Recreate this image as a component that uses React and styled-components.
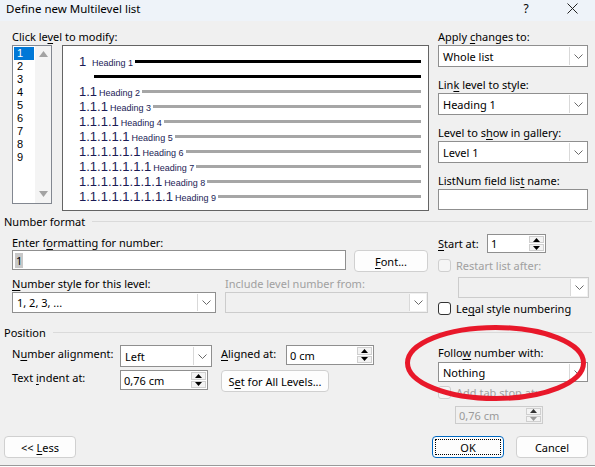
import React from 'react';
import styled, { createGlobalStyle, css } from 'styled-components';

const Global = createGlobalStyle`
  html, body { margin: 0; padding: 0; background: #ffffff; }
  body { font-family: "Noto Sans", sans-serif; }
  u { text-decoration: underline; text-underline-offset: 2px; }
`;

const Window = styled.div`
  position: relative;
  width: 595px;
  height: 466px;
  box-sizing: border-box;
  background: #f0f0f0;
  border-bottom: 1px solid #9a9a9a;
  display: flex;
  flex-direction: column;
  font-family: "Noto Sans", sans-serif;
  font-size: 11px;
  line-height: 15px;
  color: #000;
  overflow: hidden;
`;

const TitleBar = styled.div`
  height: 21px;
  flex: none;
  background: #eef3f9;
  display: flex;
  align-items: flex-start;
  padding: 1px 0 0 6px;
  box-sizing: border-box;
  font-size: 11.5px;
`;

const Title = styled.div`
  flex: 1;
`;

const TitleButton = styled.div`
  width: 46px;
  height: 20px;
  display: flex;
  justify-content: center;
  align-items: flex-start;
  padding-top: ${p => p.$top || 0}px;
  box-sizing: border-box;
  font-size: 12px;
`;

const Body = styled.div`
  flex: 1;
  display: flex;
  flex-direction: column;
  padding: 0 7px 7px 4px;
`;

const TopSection = styled.div`
  display: flex;
  gap: 10px;
  padding-left: 8px;
  margin-top: 8px;
`;

const Column = styled.div`
  display: flex;
  flex-direction: column;
  width: ${p => p.$w}px;
  flex: none;
`;

const Label = styled.div`
  height: ${p => p.$h || 16}px;
  margin-top: ${p => p.$mt || 0}px;
  margin-left: ${p => p.$ml || 0}px;
  padding-top: ${p => p.$pt || 0}px;
  width: ${p => (p.$w ? `${p.$w}px` : 'auto')};
  flex: none;
  white-space: nowrap;
  color: ${p => (p.$disabled ? '#a0a0a0' : '#000')};
  box-sizing: border-box;
`;

const Row = styled.div`
  display: flex;
  align-items: ${p => p.$align || 'flex-start'};
  gap: ${p => p.$gap || 0}px;
  margin-top: ${p => p.$mt || 0}px;
  margin-left: ${p => p.$ml || 0}px;
`;

const ListBox = styled.div`
  width: 40px;
  height: 159px;
  box-sizing: border-box;
  border: 1px solid #828790;
  background: #fff;
  display: flex;
  flex: none;
`;

const ListItems = styled.div`
  flex: 1;
  padding: 1px 0 0 1px;
  display: flex;
  flex-direction: column;
`;

const ListItem = styled.div`
  height: 13px;
  line-height: 13px;
  font-family: "Liberation Sans", Arial, sans-serif;
  font-size: 11px;
  padding-left: 3px;
  width: 20px;
  box-sizing: border-box;
  ${p => p.$selected && css`background: #0078d7; color: #fff;`}
`;

const ScrollTrack = styled.div`
  width: 16px;
  background: #f4f4f4;
  display: flex;
  flex-direction: column;
  justify-content: space-between;
  align-items: center;
  padding: 5px 0 6px;
`;

const Preview = styled.div`
  width: 367px;
  height: 166px;
  box-sizing: border-box;
  border: 1px solid #646464;
  background: #fff;
  padding: 8px 7px 0 16px;
  display: flex;
  flex-direction: column;
  flex: none;
`;

const PreviewRow = styled.div`
  height: 15px;
  display: flex;
  align-items: baseline;
  padding-left: ${p => p.$indent || 0}px;
`;

const Num = styled.span`
  font-family: "Liberation Sans", Arial, sans-serif;
  font-size: 13px;
  color: #1b1b55;
  min-width: ${p => p.$min || 0}px;
  flex: none;
`;

const HeadingText = styled.span`
  font-family: "Liberation Sans", Arial, sans-serif;
  font-size: 9px;
  color: #1b1b55;
  margin-left: ${p => p.$ml ?? 2}px;
  flex: none;
`;

const PreviewLine = styled.div`
  flex: 1;
  height: 3px;
  align-self: center;
  margin-left: 2px;
  background: ${p => (p.$dark ? '#000' : '#a6a6a6')};
`;

const Field = styled.div`
  display: flex;
  flex-direction: column;
  margin-top: ${p => p.$mt || 0}px;
`;

const Box = styled.div`
  width: ${p => (p.$w ? `${p.$w}px` : '100%')};
  height: ${p => p.$h || 21}px;
  box-sizing: border-box;
  border: 1px solid ${p => (p.$disabled ? '#cccccc' : '#8f8f8f')};
  background: ${p => (p.$disabled ? '#f0f0f0' : '#fff')};
  color: ${p => (p.$disabled ? '#9a9a9a' : '#000')};
  display: flex;
  align-items: stretch;
  flex: none;
  margin-left: ${p => p.$ml || 0}px;
  margin-top: ${p => p.$mt || 0}px;
`;

const BoxText = styled.div`
  flex: 1;
  display: flex;
  align-items: center;
  padding-left: ${p => p.$pl ?? 4}px;
  white-space: nowrap;
  overflow: hidden;
`;

const Chevron = styled.div`
  width: 16px;
  margin: 1px;
  border-left: 1px solid #d9d9d9;
  background: #fff;
  display: flex;
  align-items: center;
  justify-content: center;
`;

const SpinCol = styled.div`
  width: 15px;
  margin: 1px;
  display: flex;
  flex-direction: column;
  gap: 1px;
`;

const SpinHalf = styled.div`
  flex: 1;
  border: 1px solid #cfcfcf;
  background: #f3f3f3;
  display: flex;
  align-items: center;
  justify-content: center;
`;

const Selected = styled.span`
  background: #c8c8c8;
  padding: 0 1px;
`;

const GroupHeader = styled.div`
  display: flex;
  align-items: center;
  height: 15px;
  margin-top: ${p => p.$mt || 0}px;
  margin-right: -4px;
`;

const GroupLine = styled.div`
  flex: 1;
  height: 1px;
  background: #dadada;
  margin-left: 7px;
`;

const Section = styled.div`
  display: flex;
  gap: 10px;
  padding-left: 8px;
`;

const Button = styled.div`
  width: ${p => p.$w || 72}px;
  height: 22px;
  box-sizing: border-box;
  border: 1px solid ${p => (p.$focus ? '#0067c0' : '#d0d0d0')};
  border-radius: 4px;
  background: #fdfdfd;
  display: flex;
  align-items: center;
  justify-content: center;
  flex: none;
  margin-left: ${p => p.$ml || 0}px;
  position: relative;
  ${p => p.$focus && css`
    &::after {
      content: '';
      position: absolute;
      inset: 2px;
      border: 1px dotted #000;
    }
  `}
`;

const CheckRow = styled.div`
  display: flex;
  align-items: center;
  gap: 5px;
  height: 13px;
  margin-top: ${p => p.$mt || 0}px;
  color: ${p => (p.$disabled ? '#a0a0a0' : '#000')};
  white-space: nowrap;
`;

const CheckBox = styled.div`
  width: 13px;
  height: 13px;
  box-sizing: border-box;
  border: 1px solid ${p => (p.$disabled ? '#cfcfcf' : '#333')};
  border-radius: 3px;
  background: ${p => (p.$disabled ? '#f5f5f5' : '#fff')};
  flex: none;
`;

const Footer = styled.div`
  margin-top: auto;
  display: flex;
  align-items: center;
`;

const Spacer = styled.div`
  flex: 1;
`;

const Highlight = styled.svg`
  position: absolute;
  left: 400px;
  top: 320px;
  pointer-events: none;
`;

const ChevronIcon = () => (
  <svg width="9" height="5" viewBox="0 0 9 5">
    <path d="M0.5 0.5 L4.5 4.5 L8.5 0.5" fill="none" stroke="#6a6a6a" strokeWidth="1" />
  </svg>
);

const Tri = ({ down, color = '#000' }) => (
  <svg width="7" height="4" viewBox="0 0 7 4">
    <path d={down ? 'M0 0 L7 0 L3.5 4 Z' : 'M0 4 L7 4 L3.5 0 Z'} fill={color} />
  </svg>
);

const Select = ({ w, h, children, disabled, ml, mt }) => (
  <Box $w={w} $h={h} $disabled={disabled} $ml={ml} $mt={mt}>
    <BoxText>{children}</BoxText>
    <Chevron><ChevronIcon /></Chevron>
  </Box>
);

const Spin = ({ w, h, children, disabled, ml, mt }) => (
  <Box $w={w} $h={h} $disabled={disabled} $ml={ml} $mt={mt}>
    <BoxText $pl={3}>{children}</BoxText>
    <SpinCol>
      <SpinHalf><Tri color={disabled ? '#333' : '#000'} /></SpinHalf>
      <SpinHalf><Tri down color={disabled ? '#999' : '#000'} /></SpinHalf>
    </SpinCol>
  </Box>
);

const levels = [2, 3, 4, 5, 6, 7, 8, 9];

export default function App() {
  return (
    <>
      <Global />
      <Window>
        <TitleBar>
          <Title>Define new Multilevel list</Title>
          <TitleButton>?</TitleButton>
          <TitleButton $top={2}>
            <svg width="11" height="11" viewBox="0 0 11 11">
              <path d="M0.5 0.5 L10.5 10.5 M10.5 0.5 L0.5 10.5" stroke="#222" strokeWidth="1" />
            </svg>
          </TitleButton>
        </TitleBar>
        <Body>
          <TopSection>
            <Column $w={416}>
              <Label>Click le<u>v</u>el to modify:</Label>
              <Row $gap={10}>
                <ListBox>
                  <ListItems>
                    {[1, ...levels].map(n => (
                      <ListItem key={n} $selected={n === 1}>{n}</ListItem>
                    ))}
                  </ListItems>
                  <ScrollTrack>
                    <svg width="9" height="6" viewBox="0 0 9 6"><path d="M0 6 L9 6 L4.5 0 Z" fill="#a3a3a3" /></svg>
                    <svg width="9" height="6" viewBox="0 0 9 6"><path d="M0 0 L9 0 L4.5 6 Z" fill="#a3a3a3" /></svg>
                  </ScrollTrack>
                </ListBox>
                <Preview>
                  <PreviewRow>
                    <Num $min={13}>1</Num>
                    <HeadingText $ml={0}>Heading 1</HeadingText>
                    <PreviewLine $dark />
                  </PreviewRow>
                  <PreviewRow $indent={13}>
                    <PreviewLine $dark />
                  </PreviewRow>
                  {levels.map(n => (
                    <PreviewRow key={n}>
                      <Num>{Array(n).fill('1').join('.')}</Num>
                      <HeadingText>Heading {n}</HeadingText>
                      <PreviewLine />
                    </PreviewRow>
                  ))}
                </Preview>
              </Row>
            </Column>
            <Column $w={150}>
              <Field>
                <Label>Apply <u>c</u>hanges to:</Label>
                <Select h={22}>Whole list</Select>
              </Field>
              <Field $mt={10}>
                <Label>Lin<u>k</u> level to style:</Label>
                <Select h={22}>Heading 1</Select>
              </Field>
              <Field $mt={10}>
                <Label>Level to s<u>h</u>ow in gallery:</Label>
                <Select h={22}>Level 1</Select>
              </Field>
              <Field $mt={10}>
                <Label>ListNum field lis<u>t</u> name:</Label>
                <Box $h={21} />
              </Field>
            </Column>
          </TopSection>

          <GroupHeader $mt={3}>
            Number format
            <GroupLine />
          </GroupHeader>
          <Section>
            <Column $w={416}>
              <Label $mt={6} $h={15}>Enter f<u>o</u>rmatting for number:</Label>
              <Row>
                <Box $w={334} $h={20}>
                  <BoxText $pl={2}><Selected>1</Selected></BoxText>
                </Box>
                <Button $w={74} $ml={8}><span><u>F</u>ont...</span></Button>
              </Row>
              <Row $gap={9} $mt={4}>
                <Field>
                  <Label><u>N</u>umber style for this level:</Label>
                  <Select w={204}>1, 2, 3, ...</Select>
                </Field>
                <Field>
                  <Label $disabled>Include level number from:</Label>
                  <Select w={203} disabled />
                </Field>
              </Row>
            </Column>
            <Column $w={151}>
              <Row $align="center" $mt={5}>
                <Label $w={49} $h={15}><u>S</u>tart at:</Label>
                <Spin w={59} h={19}>1</Spin>
              </Row>
              <CheckRow $mt={6} $disabled>
                <CheckBox $disabled />
                Restart list after:
              </CheckRow>
              <Select w={131} ml={20} mt={5} disabled />
              <CheckRow $mt={4}>
                <CheckBox />
                <span>Le<u>g</u>al style numbering</span>
              </CheckRow>
            </Column>
          </Section>

          <GroupHeader $mt={10}>
            Position
            <GroupLine />
          </GroupHeader>
          <Section>
            <Column $w={416}>
              <Row $mt={5}>
                <Label $w={108} $pt={1}>N<u>u</u>mber alignment:</Label>
                <Select w={92} h={22}>Left</Select>
                <Label $w={65} $pt={1} $ml={9}><u>A</u>ligned at:</Label>
                <Spin w={88} h={20}>0 cm</Spin>
              </Row>
              <Row $mt={3}>
                <Label $w={108}>Text <u>i</u>ndent at:</Label>
                <Spin w={88} h={20}>0,76 cm</Spin>
                <Button $w={108} $ml={13}><span>S<u>e</u>t for All Levels...</span></Button>
              </Row>
            </Column>
            <Column $w={151}>
              <Label $mt={5} $h={17}>Follo<u>w</u> number with:</Label>
              <Select w={150} h={20}>Nothing</Select>
              <CheckRow $mt={4} $disabled>
                <CheckBox $disabled />
                Add tab stop at:
              </CheckRow>
              <Spin w={88} h={18} ml={17} mt={7} disabled>0,76 cm</Spin>
            </Column>
          </Section>

          <Footer>
            <Button><span>&lt;&lt; <u>L</u>ess</span></Button>
            <Spacer />
            <Button $focus>OK</Button>
            <Button $ml={12}>Cancel</Button>
          </Footer>
        </Body>
        <Highlight width="195" height="90" viewBox="0 0 195 90">
          <ellipse cx="95.5" cy="43" rx="88" ry="35.5" fill="none" stroke="#e8182a" strokeWidth="5" />
        </Highlight>
      </Window>
    </>
  );
}
